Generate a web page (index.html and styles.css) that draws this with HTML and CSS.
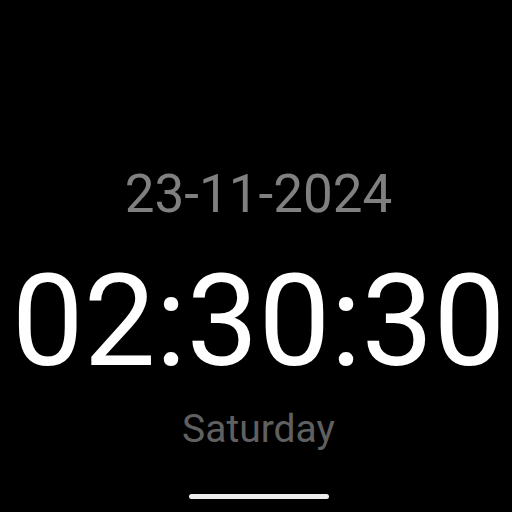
FILE: index.html
```html
<!DOCTYPE html>
<html>
<head>
<meta charset="utf-8">
<link rel="stylesheet" href="styles.css">
</head>
<body>
<main class="screen">
  <div class="date">23-11-2024</div>
  <div class="time">02:30:30</div>
  <div class="day">Saturday</div>
  <div class="handle"></div>
</main>
</body>
</html>
```
FILE: styles.css
```css
html, body {
  margin: 0;
  padding: 0;
  background: #000;
}
.screen {
  width: 512px;
  height: 512px;
  box-sizing: border-box;
  padding-top: 168px;
  padding-left: 5px;
  display: flex;
  flex-direction: column;
  align-items: center;
  font-family: Roboto, "Liberation Sans", sans-serif;
  overflow: hidden;
}
.date {
  font-size: 53px;
  line-height: 53px;
  color: #808080;
}
.time {
  margin-top: 36px;
  font-size: 128px;
  line-height: 128px;
  color: #fff;
  white-space: nowrap;
}
.day {
  margin-top: 25px;
  font-size: 39px;
  line-height: 39px;
  color: #606060;
}
.handle {
  margin-top: 45px;
  width: 140px;
  height: 5px;
  border-radius: 3px;
  background: #eee;
}
```
